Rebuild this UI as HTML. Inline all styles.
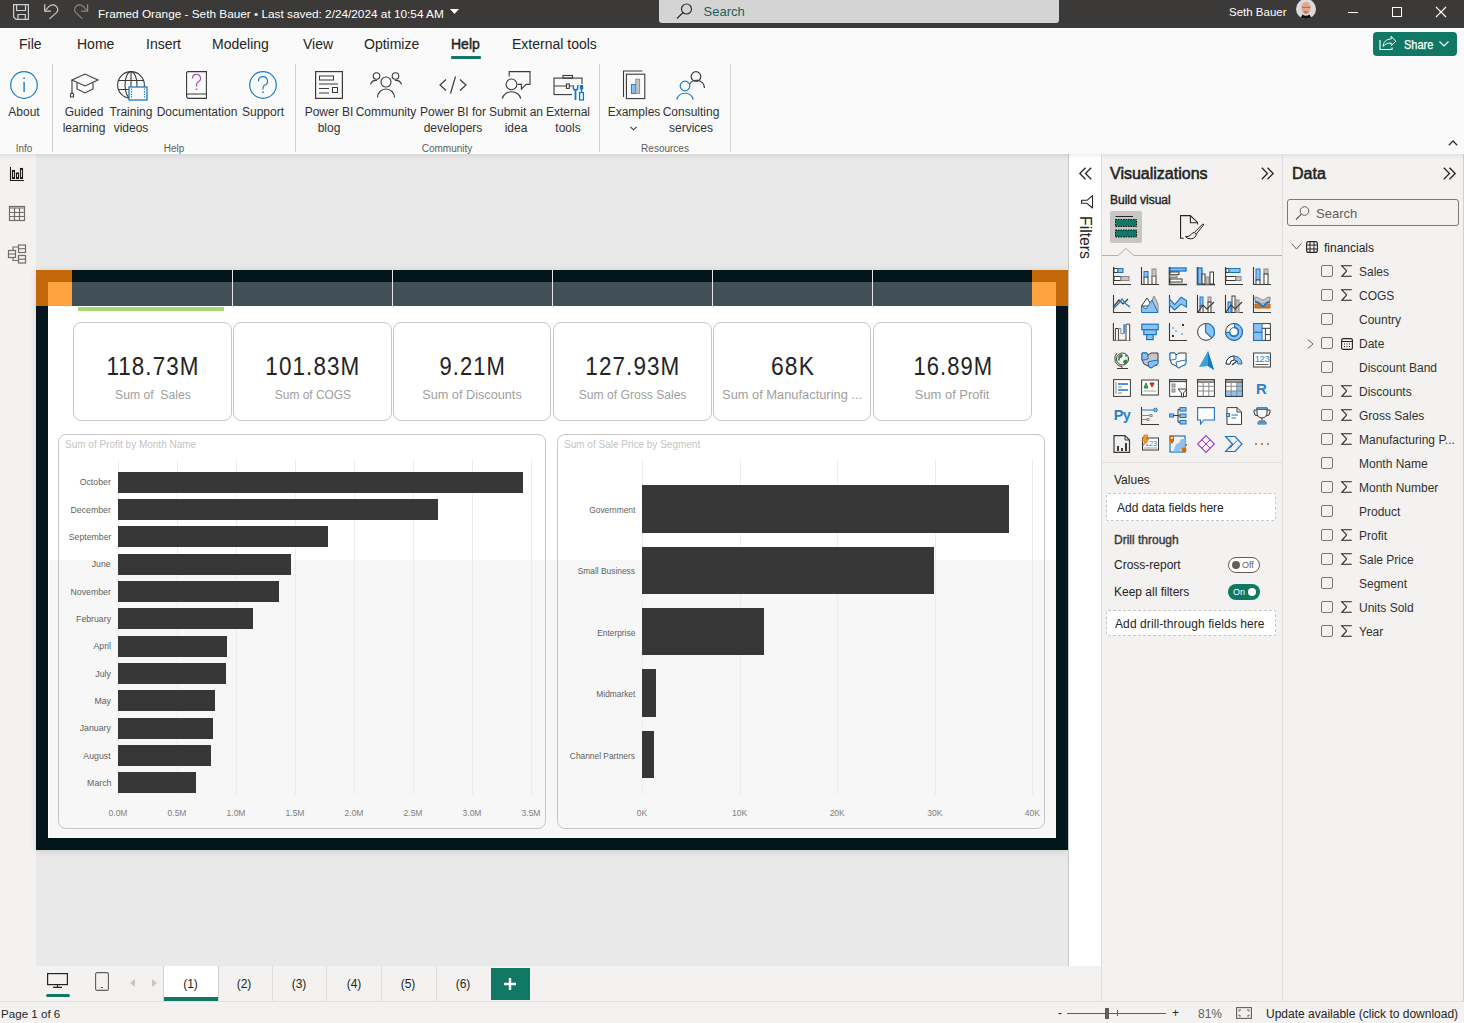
<!DOCTYPE html>
<html><head><meta charset="utf-8">
<style>
*{box-sizing:border-box;margin:0;padding:0}
html,body{width:1464px;height:1023px;overflow:hidden;background:#f3f2f1;font-family:"Liberation Sans",sans-serif;color:#252423}
.a{position:absolute}
.t{position:absolute;white-space:nowrap;line-height:1}
svg{position:absolute;overflow:visible}
#title{left:0;top:0;width:1464px;height:28px;background:#3b3a39}
#tabs{left:0;top:28px;width:1464px;height:126px;background:#fafafa;border-top:1px solid #fff}
.tab{position:absolute;top:37px;font-size:14px;color:#252423;white-space:nowrap;line-height:1}
.rl{position:absolute;font-size:12px;color:#323130;white-space:nowrap;line-height:16px;text-align:center}
.gl{position:absolute;top:143.5px;font-size:10px;color:#605e5c;white-space:nowrap;line-height:1;text-align:center}
.sep{position:absolute;top:64px;width:1px;height:88px;background:#d2d0ce}
.kv{font-size:25px;color:#252423}
.kl{font-size:12.5px;color:#a0a0a0}
.ct{font-size:10px;color:#c4c4c4}
.ax{font-size:8.5px;color:#808080}
.yl{font-size:9.5px;color:#5f5f5f}
.bar{background:#373737}
.ys{font-size:8.2px}
</style></head><body>

<!-- TITLE BAR -->
<div id="title" class="a"></div>
<svg style="left:13px;top:4px" width="17" height="17" viewBox="0 0 17 17"><path d="M0.6 0.6H15.4V15.4H3L0.6 13Z" fill="none" stroke="#cfcfcf" stroke-width="1.2"/><path d="M3.6 0.6V6.5H12.5V0.6M5 15.4V10.5H12.3V15.4" fill="none" stroke="#cfcfcf" stroke-width="1.2"/></svg>
<svg style="left:44px;top:4px" width="16" height="16" viewBox="0 0 16 16"><path d="M0.7 0.2V7.1H7" fill="none" stroke="#cfcfcf" stroke-width="1.2"/><path d="M1.3 6.5L5 2.5Q8.5 -0.5 12.2 2.2Q15.2 5.5 12.5 8.7L5.5 14.9" fill="none" stroke="#cfcfcf" stroke-width="1.1"/></svg>
<svg style="left:74px;top:4px" width="16" height="16" viewBox="0 0 16 16"><path d="M13.6 0.2V7.1H7.3" fill="none" stroke="#8a8a8a" stroke-width="1.2"/><path d="M13 6.5L9.3 2.5Q5.8 -0.5 2.1 2.2Q-0.9 5.5 1.8 8.7L8.5 14.9" fill="none" stroke="#8a8a8a" stroke-width="1.1"/></svg>
<div class="t" style="left:98px;top:9.3px;font-size:11.8px;color:#fff">Framed Orange - Seth Bauer • Last saved: 2/24/2024 at 10:54 AM</div>
<svg style="left:450px;top:9px" width="9" height="5" viewBox="0 0 9 5"><path d="M0 0h9L4.5 5z" fill="#fff"/></svg>
<div class="a" style="left:659px;top:0;width:400px;height:23px;background:#d4d4d4;border-radius:0 0 3px 3px"></div>
<svg style="left:676px;top:3px" width="17" height="16" viewBox="0 0 17 16"><circle cx="10.5" cy="6" r="5" fill="none" stroke="#323130" stroke-width="1.2"/><path d="M7 9.5L1 15.5" stroke="#323130" stroke-width="1.3"/></svg>
<div class="t" style="left:703.5px;top:5px;font-size:13px;color:#1f5e55">Search</div>
<div class="t" style="left:1229px;top:7px;font-size:11.5px;color:#fff">Seth Bauer</div>
<svg style="left:1296px;top:-1px" width="20" height="20" viewBox="0 0 20 20"><defs><clipPath id="av"><circle cx="10" cy="10" r="10"/></clipPath></defs><g clip-path="url(#av)"><rect width="20" height="20" fill="#dadada"/><ellipse cx="10" cy="9" rx="4.6" ry="6.3" fill="#e2a88e"/><path d="M5.8 8.3H14.3" stroke="#7a6a66" stroke-width="0.9"/><path d="M7.2 12.3Q10 16 12.8 12.3" fill="#b86a48"/><path d="M4 20L6.5 15.5Q10 18 13.5 15.5L16 20Z" fill="#111"/></g></svg>
<div class="a" style="left:1348px;top:12px;width:10px;height:1px;background:#fff"></div>
<div class="a" style="left:1392px;top:7px;width:10px;height:10px;border:1px solid #fff"></div>
<svg style="left:1436px;top:7px" width="10" height="10" viewBox="0 0 10 10"><path d="M0 0L10 10M10 0L0 10" stroke="#fff" stroke-width="1.1"/></svg>

<!-- RIBBON -->
<div id="tabs" class="a"></div>
<div class="tab" style="left:19px">File</div>
<div class="tab" style="left:77px">Home</div>
<div class="tab" style="left:146px">Insert</div>
<div class="tab" style="left:212px">Modeling</div>
<div class="tab" style="left:303px">View</div>
<div class="tab" style="left:364px">Optimize</div>
<div class="tab" style="left:451px;font-size:14px;-webkit-text-stroke:0.45px #252423">Help</div>
<div class="a" style="left:451px;top:56px;width:30px;height:3px;background:#117865;border-radius:1px"></div>
<div class="tab" style="left:512px">External tools</div>
<div class="a" style="left:1373px;top:32px;width:84px;height:24px;background:#117865;border-radius:4px"></div>
<svg style="left:1378px;top:35px" width="20" height="17" viewBox="0 0 20 17"><path d="M2 5V14.5H14V12.5" fill="none" stroke="#fff" stroke-width="1.2"/><path d="M17.8 6.2L13.2 1.3V4C8 4 5.2 7.5 5.2 11.4C7 9 9.5 8 13.2 8V10.8Z" fill="none" stroke="#fff" stroke-width="1" stroke-linejoin="round"/></svg>
<div class="t" style="left:1404px;top:39px;font-size:12.2px;color:#fff;-webkit-text-stroke:0.25px #fff;transform-origin:0 0;transform:scaleX(0.9)">Share</div>
<svg style="left:1439px;top:41px" width="10" height="6" viewBox="0 0 10 6"><path d="M0.5 0.5L5 5L9.5 0.5" fill="none" stroke="#fff" stroke-width="1.2"/></svg>

<!-- About -->
<svg style="left:10px;top:71px" width="28" height="28" viewBox="0 0 28 28"><circle cx="14" cy="14" r="13.3" fill="none" stroke="#1a7cc9" stroke-width="1.2"/><rect x="13.4" y="11" width="1.4" height="10" fill="#1a7cc9"/><rect x="13.3" y="6.5" width="1.6" height="1.6" fill="#1a7cc9"/></svg>
<div class="rl" style="left:-6px;top:104px;width:60px">About</div>
<div class="gl" style="left:0;width:48px">Info</div>
<div class="sep" style="left:52px"></div>
<!-- Guided learning -->
<svg style="left:70px;top:73px" width="30" height="26" viewBox="0 0 30 26"><path d="M2 7L15 1L28 7L15 13Z" fill="none" stroke="#3b3a39" stroke-width="1.1"/><path d="M7 10v6l8 4 8-4v-6" fill="none" stroke="#3b3a39" stroke-width="1.1"/><path d="M2 7v13" stroke="#3b3a39" stroke-width="1.1"/><path d="M0.5 24v-3l1.5-1 1.5 1v3z" fill="none" stroke="#3b3a39" stroke-width="1.1"/></svg>
<div class="rl" style="left:54px;top:104px;width:60px">Guided<br>learning</div>
<!-- Training videos -->
<svg style="left:117px;top:71px" width="31" height="30" viewBox="0 0 31 30"><circle cx="14" cy="14" r="13.4" fill="none" stroke="#3b3a39" stroke-width="1.1"/><ellipse cx="14" cy="14" rx="6" ry="13.4" fill="none" stroke="#3b3a39" stroke-width="1.1"/><path d="M1 9.5h26M1 18.5h26M14 0.6v26.8" stroke="#3b3a39" stroke-width="1.1"/><rect x="12" y="16" width="18" height="13" fill="#fafafa" stroke="#1a7cc9" stroke-width="1.3"/><path d="M14.5 17.5v10M27.5 17.5v10" stroke="#1a7cc9" stroke-width="1.2" stroke-dasharray="1.3 1.3"/></svg>
<div class="rl" style="left:101px;top:104px;width:60px">Training<br>videos</div>
<!-- Documentation -->
<svg style="left:186px;top:71px" width="22" height="28" viewBox="0 0 22 28"><path d="M2 0.6h18.4v26.8H3A2.4 2.4 0 0 1 0.6 25V2A1.4 1.4 0 0 1 2 0.6z" fill="none" stroke="#3b3a39" stroke-width="1.1"/><path d="M0.6 24.5A1.6 1.6 0 0 1 2.2 23h18.2" fill="none" stroke="#3b3a39" stroke-width="1.1"/><path d="M6.5 7.5A4 4 0 1 1 12 11c-1.3.6-1.5 1.5-1.5 3v1.5" fill="none" stroke="#b146c2" stroke-width="1.2"/><rect x="9.8" y="17.5" width="1.5" height="1.5" fill="#b146c2"/></svg>
<div class="rl" style="left:147px;top:104px;width:100px">Documentation</div>
<!-- Support -->
<svg style="left:249px;top:71px" width="28" height="28" viewBox="0 0 28 28"><circle cx="14" cy="14" r="13.3" fill="none" stroke="#1a7cc9" stroke-width="1.2"/><path d="M9.5 10.5A4.5 4.5 0 1 1 15.5 14.3c-1.2.6-1.5 1.4-1.5 2.8v1.5" fill="none" stroke="#1a7cc9" stroke-width="1.2"/><rect x="13.3" y="20.5" width="1.5" height="1.5" fill="#1a7cc9"/></svg>
<div class="rl" style="left:233px;top:104px;width:60px">Support</div>
<div class="gl" style="left:124px;width:100px">Help</div>
<div class="sep" style="left:295px"></div>
<!-- Power BI blog -->
<svg style="left:315px;top:71px" width="28" height="28" viewBox="0 0 28 28"><rect x="0.6" y="0.6" width="26.8" height="26.8" fill="none" stroke="#3b3a39" stroke-width="1.2"/><rect x="4.5" y="5" width="14" height="4" fill="none" stroke="#3b3a39" stroke-width="1"/><path d="M4 13h19M4 17.5h10M4 22h10" stroke="#3b3a39" stroke-width="1"/><rect x="17.5" y="16.5" width="5" height="5" fill="none" stroke="#3b3a39" stroke-width="1"/></svg>
<div class="rl" style="left:299px;top:104px;width:60px">Power BI<br>blog</div>
<!-- Community -->
<svg style="left:370px;top:72px" width="32" height="26" viewBox="0 0 32 26"><circle cx="6.5" cy="4" r="3.3" fill="none" stroke="#3b3a39" stroke-width="1.1"/><circle cx="25.5" cy="4" r="3.3" fill="none" stroke="#3b3a39" stroke-width="1.1"/><circle cx="16" cy="10" r="5" fill="none" stroke="#3b3a39" stroke-width="1.1"/><path d="M0.5 12.5A6 6 0 0 1 7 8.5M31.5 12.5A6 6 0 0 0 25 8.5M7.5 25.5A8.5 8.5 0 0 1 24.5 25.5" fill="none" stroke="#3b3a39" stroke-width="1.1"/></svg>
<div class="rl" style="left:346px;top:104px;width:80px">Community</div>
<!-- Power BI for developers -->
<svg style="left:439px;top:76px" width="28" height="18" viewBox="0 0 28 18"><path d="M7 3.5L1 9l6 5.5M21 3.5L27 9l-6 5.5M16.5 0.5l-5 17" fill="none" stroke="#3b3a39" stroke-width="1.2"/></svg>
<div class="rl" style="left:413px;top:104px;width:80px">Power BI for<br>developers</div>
<!-- Submit an idea -->
<svg style="left:501px;top:71px" width="30" height="29" viewBox="0 0 30 29"><path d="M8.2 5.5V0.6H29V13.4H25L20.4 18.1V13.4H16.5" fill="none" stroke="#3b3a39" stroke-width="1.1" stroke-linejoin="miter"/><circle cx="10.5" cy="13.4" r="5.4" fill="#fafafa" stroke="#3b3a39" stroke-width="1.1"/><path d="M1.3 27.6A9.3 8 0 0 1 19.7 27.6" fill="none" stroke="#3b3a39" stroke-width="1.1"/></svg>
<div class="rl" style="left:486px;top:104px;width:60px">Submit an<br>idea</div>
<!-- External tools -->
<svg style="left:553px;top:75px" width="32" height="26" viewBox="0 0 32 26"><rect x="1" y="3.1" width="28" height="16.5" fill="none" stroke="#3b3a39" stroke-width="1.1"/><rect x="10" y="0.5" width="9.5" height="2.6" fill="none" stroke="#3b3a39" stroke-width="1.1"/><path d="M1 11H13.5M16.3 11H20" stroke="#3b3a39" stroke-width="1.1"/><rect x="13.5" y="9" width="2.8" height="4.4" fill="#fafafa" stroke="#3b3a39" stroke-width="1.1"/><rect x="19" y="9" width="12" height="17" fill="#fafafa"/><path d="M20.3 10V12.8A2.2 2.2 0 0 0 24.7 12.8V10" fill="none" stroke="#1a73c8" stroke-width="1.5"/><path d="M22.5 15V25" stroke="#1a73c8" stroke-width="1.8"/><path d="M28.5 10V17" stroke="#1a73c8" stroke-width="1.3"/><rect x="26.8" y="10" width="3.4" height="4.5" fill="#1a73c8"/><rect x="26.6" y="17.5" width="3.8" height="7.5" fill="#fafafa" stroke="#1a73c8" stroke-width="1.3"/></svg>
<div class="rl" style="left:538px;top:104px;width:60px">External<br>tools</div>
<div class="gl" style="left:397px;width:100px">Community</div>
<div class="sep" style="left:599px"></div>
<!-- Examples -->
<svg style="left:622px;top:70px" width="24" height="30" viewBox="0 0 24 30"><path d="M1.5 27V1H20.4" fill="none" stroke="#3b3a39" stroke-width="1.1"/><rect x="4.4" y="4.2" width="18.4" height="24.4" fill="#fafafa" stroke="#3b3a39" stroke-width="1.1"/><rect x="9.4" y="14.4" width="3.9" height="9" fill="#8dc1ee" stroke="#1a73c8" stroke-width="0.9"/><rect x="13.8" y="9.2" width="3.8" height="14.2" fill="#c8c6c4" stroke="#8a8886" stroke-width="0.9"/></svg>
<div class="rl" style="left:604px;top:104px;width:60px">Examples</div>
<svg style="left:630px;top:126px" width="7" height="5" viewBox="0 0 7 5"><path d="M0.5 0.8L3.5 3.8L6.5 0.8" fill="none" stroke="#3b3a39" stroke-width="1.1"/></svg>
<!-- Consulting services -->
<svg style="left:676px;top:71px" width="30" height="29" viewBox="0 0 30 29"><circle cx="20" cy="5.5" r="4.8" fill="none" stroke="#3b3a39" stroke-width="1.2"/><path d="M13 14.5A8 8 0 0 1 28.5 17" fill="none" stroke="#3b3a39" stroke-width="1.2"/><circle cx="9" cy="15" r="4.8" fill="#fafafa" stroke="#1a7cc9" stroke-width="1.2"/><path d="M0.8 28.5A8.5 8.5 0 0 1 17.2 28.5" fill="none" stroke="#1a7cc9" stroke-width="1.2"/></svg>
<div class="rl" style="left:651px;top:104px;width:80px">Consulting<br>services</div>
<div class="gl" style="left:615px;width:100px">Resources</div>
<div class="sep" style="left:730px"></div>
<svg style="left:1448px;top:140px" width="10" height="6" viewBox="0 0 10 6"><path d="M0.8 5.2L5 1L9.2 5.2" fill="none" stroke="#323130" stroke-width="1.3"/></svg>

<!--REPORT-->
<!-- LEFT NAV + CANVAS -->
<div class="a" style="left:0;top:154px;width:36px;height:812px;background:#f3f2f1"></div>
<div class="a" style="left:36px;top:154px;width:1032px;height:812px;background:#e9e9e9"></div>
<div class="a" style="left:0;top:154px;width:1068px;height:6px;background:linear-gradient(rgba(0,0,0,0.07),rgba(0,0,0,0))"></div>
<svg style="left:9px;top:166px" width="16" height="16" viewBox="0 0 16 16"><path d="M1.5 1V14.5H15" fill="none" stroke="#1b1a19" stroke-width="1.1"/><rect x="3.5" y="4.5" width="2" height="8" fill="none" stroke="#1b1a19" stroke-width="1.1"/><rect x="7.5" y="7" width="2" height="5.5" fill="none" stroke="#1b1a19" stroke-width="1.1"/><rect x="11.5" y="2.5" width="2" height="10" fill="none" stroke="#1b1a19" stroke-width="1.1"/></svg>
<svg style="left:9px;top:206px" width="17" height="16" viewBox="0 0 17 16"><rect x="0.5" y="0.5" width="15" height="14" fill="none" stroke="#706e6c" stroke-width="1.2"/><path d="M0.5 2H15.5M0.5 6.5H15.5M0.5 10.5H15.5M5.5 2V14.5M10.5 2V14.5" stroke="#706e6c" stroke-width="1.2"/></svg>
<svg style="left:8px;top:244px" width="19" height="20" viewBox="0 0 19 20"><path d="M5 6.5V3H10.5M5 13.5V16.5H10.5" fill="none" stroke="#706e6c" stroke-width="1.2"/><rect x="0.5" y="6.5" width="7" height="7" fill="#f3f2f1" stroke="#706e6c" stroke-width="1.2"/><path d="M0.5 10H7.5" stroke="#706e6c" stroke-width="1.1"/><rect x="10.5" y="1" width="7" height="7.5" fill="#f3f2f1" stroke="#706e6c" stroke-width="1.2"/><path d="M10.5 4.7H17.5" stroke="#706e6c" stroke-width="1.1"/><rect x="10.5" y="11.5" width="7" height="7.5" fill="#f3f2f1" stroke="#706e6c" stroke-width="1.2"/><path d="M10.5 15.2H17.5" stroke="#706e6c" stroke-width="1.1"/></svg>
<div class="a" style="left:36px;top:270px;width:1032px;height:580px;background:#03161b;box-shadow:0 1px 7px rgba(0,0,0,0.13)"></div>
<div class="a" style="left:36px;top:270px;width:36px;height:36px;background:#c2670a"></div>
<div class="a" style="left:48px;top:282px;width:24px;height:24px;background:#fea340"></div>
<div class="a" style="left:1032px;top:270px;width:36px;height:36px;background:#c2670a"></div>
<div class="a" style="left:1032px;top:282px;width:24px;height:24px;background:#fea340"></div>
<div class="a" style="left:72px;top:282px;width:960px;height:24px;background:#414f56"></div>
<div class="a" style="left:232px;top:270px;width:1px;height:36px;background:#e6e6e6"></div>
<div class="a" style="left:392px;top:270px;width:1px;height:36px;background:#e6e6e6"></div>
<div class="a" style="left:552px;top:270px;width:1px;height:36px;background:#e6e6e6"></div>
<div class="a" style="left:712px;top:270px;width:1px;height:36px;background:#e6e6e6"></div>
<div class="a" style="left:872px;top:270px;width:1px;height:36px;background:#e6e6e6"></div>
<div class="a" style="left:48px;top:306px;width:1008px;height:532px;background:#ffffff"></div>
<div class="a" style="left:49px;top:560px;width:1007px;height:278px;background:#f7f7f7"></div>
<div class="a" style="left:78px;top:307px;width:146px;height:4px;background:#a5da78"></div>
<div class="a" style="left:73px;top:322px;width:159px;height:99px;border:1px solid #c6c6c6;border-radius:8px"></div>
<div class="t kv" style="left:73px;top:353.8px;width:159px;text-align:center"><span style="display:inline-block;letter-spacing:1.2px;margin-right:-1.2px;transform:scaleX(0.896)">118.73M</span></div>
<div class="t kl" style="left:73px;top:388.5px;width:159px;text-align:center"><span style="display:inline-block;transform:scaleX(0.973)">Sum of&nbsp; Sales</span></div>
<div class="a" style="left:233px;top:322px;width:159px;height:99px;border:1px solid #c6c6c6;border-radius:8px"></div>
<div class="t kv" style="left:233px;top:353.8px;width:159px;text-align:center"><span style="display:inline-block;letter-spacing:1.2px;margin-right:-1.2px;transform:scaleX(0.899)">101.83M</span></div>
<div class="t kl" style="left:233px;top:388.5px;width:159px;text-align:center"><span style="display:inline-block;transform:scaleX(0.955)">Sum of COGS</span></div>
<div class="a" style="left:393px;top:322px;width:158px;height:99px;border:1px solid #c6c6c6;border-radius:8px"></div>
<div class="t kv" style="left:393px;top:353.8px;width:158px;text-align:center"><span style="display:inline-block;letter-spacing:1.2px;margin-right:-1.2px;transform:scaleX(0.880)">9.21M</span></div>
<div class="t kl" style="left:393px;top:388.5px;width:158px;text-align:center"><span style="display:inline-block;transform:scaleX(1.016)">Sum of Discounts</span></div>
<div class="a" style="left:553px;top:322px;width:159px;height:99px;border:1px solid #c6c6c6;border-radius:8px"></div>
<div class="t kv" style="left:553px;top:353.8px;width:159px;text-align:center"><span style="display:inline-block;letter-spacing:1.2px;margin-right:-1.2px;transform:scaleX(0.899)">127.93M</span></div>
<div class="t kl" style="left:553px;top:388.5px;width:159px;text-align:center"><span style="display:inline-block;transform:scaleX(0.969)">Sum of Gross Sales</span></div>
<div class="a" style="left:713px;top:322px;width:158px;height:99px;border:1px solid #c6c6c6;border-radius:8px"></div>
<div class="t kv" style="left:713px;top:353.8px;width:158px;text-align:center"><span style="display:inline-block;letter-spacing:1.2px;margin-right:-1.2px;transform:scaleX(0.914)">68K</span></div>
<div class="t kl" style="left:713px;top:388.5px;width:158px;text-align:center"><span style="display:inline-block;transform:scaleX(1.028)">Sum of Manufacturing ...</span></div>
<div class="a" style="left:873px;top:322px;width:159px;height:99px;border:1px solid #c6c6c6;border-radius:8px"></div>
<div class="t kv" style="left:873px;top:353.8px;width:159px;text-align:center"><span style="display:inline-block;letter-spacing:1.2px;margin-right:-1.2px;transform:scaleX(0.880)">16.89M</span></div>
<div class="t kl" style="left:873px;top:388.5px;width:159px;text-align:center"><span style="display:inline-block;transform:scaleX(1.032)">Sum of Profit</span></div>
<div class="a" style="left:58px;top:434px;width:488px;height:395px;border:1px solid #c6c6c6;border-radius:8px"></div>
<div class="a" style="left:557px;top:434px;width:488px;height:395px;border:1px solid #c6c6c6;border-radius:8px"></div>
<div class="t ct" style="left:65px;top:440px">Sum of Profit by Month Name</div>
<div class="t ct" style="left:564px;top:440px">Sum of Sale Price by Segment</div>
<div class="a" style="left:118px;top:460px;width:1px;height:335px;background:#ececec"></div>
<div class="t ax" style="left:93px;top:809px;width:50px;text-align:center">0.0M</div>
<div class="a" style="left:177px;top:460px;width:1px;height:335px;background:#ececec"></div>
<div class="t ax" style="left:152px;top:809px;width:50px;text-align:center">0.5M</div>
<div class="a" style="left:236px;top:460px;width:1px;height:335px;background:#ececec"></div>
<div class="t ax" style="left:211px;top:809px;width:50px;text-align:center">1.0M</div>
<div class="a" style="left:295px;top:460px;width:1px;height:335px;background:#ececec"></div>
<div class="t ax" style="left:270px;top:809px;width:50px;text-align:center">1.5M</div>
<div class="a" style="left:354px;top:460px;width:1px;height:335px;background:#ececec"></div>
<div class="t ax" style="left:329px;top:809px;width:50px;text-align:center">2.0M</div>
<div class="a" style="left:413px;top:460px;width:1px;height:335px;background:#ececec"></div>
<div class="t ax" style="left:388px;top:809px;width:50px;text-align:center">2.5M</div>
<div class="a" style="left:472px;top:460px;width:1px;height:335px;background:#ececec"></div>
<div class="t ax" style="left:447px;top:809px;width:50px;text-align:center">3.0M</div>
<div class="a" style="left:531px;top:460px;width:1px;height:335px;background:#ececec"></div>
<div class="t ax" style="left:506px;top:809px;width:50px;text-align:center">3.5M</div>
<div class="a bar" style="left:118px;top:471.8px;width:405px;height:21px"></div>
<div class="t yl" style="left:21px;top:477.4px;width:90px;text-align:right"><span style="display:inline-block;transform-origin:100% 50%;transform:scaleX(0.92)">October</span></div>
<div class="a bar" style="left:118px;top:499.1px;width:320px;height:21px"></div>
<div class="t yl" style="left:21px;top:504.7px;width:90px;text-align:right"><span style="display:inline-block;transform-origin:100% 50%;transform:scaleX(0.92)">December</span></div>
<div class="a bar" style="left:118px;top:526.4px;width:210px;height:21px"></div>
<div class="t yl" style="left:21px;top:532.0px;width:90px;text-align:right"><span style="display:inline-block;transform-origin:100% 50%;transform:scaleX(0.92)">September</span></div>
<div class="a bar" style="left:118px;top:553.8px;width:173px;height:21px"></div>
<div class="t yl" style="left:21px;top:559.4px;width:90px;text-align:right"><span style="display:inline-block;transform-origin:100% 50%;transform:scaleX(0.92)">June</span></div>
<div class="a bar" style="left:118px;top:581.1px;width:161px;height:21px"></div>
<div class="t yl" style="left:21px;top:586.7px;width:90px;text-align:right"><span style="display:inline-block;transform-origin:100% 50%;transform:scaleX(0.92)">November</span></div>
<div class="a bar" style="left:118px;top:608.4px;width:135px;height:21px"></div>
<div class="t yl" style="left:21px;top:614.0px;width:90px;text-align:right"><span style="display:inline-block;transform-origin:100% 50%;transform:scaleX(0.92)">February</span></div>
<div class="a bar" style="left:118px;top:635.7px;width:109px;height:21px"></div>
<div class="t yl" style="left:21px;top:641.3px;width:90px;text-align:right"><span style="display:inline-block;transform-origin:100% 50%;transform:scaleX(0.92)">April</span></div>
<div class="a bar" style="left:118px;top:663.0px;width:108px;height:21px"></div>
<div class="t yl" style="left:21px;top:668.6px;width:90px;text-align:right"><span style="display:inline-block;transform-origin:100% 50%;transform:scaleX(0.92)">July</span></div>
<div class="a bar" style="left:118px;top:690.4px;width:97px;height:21px"></div>
<div class="t yl" style="left:21px;top:696.0px;width:90px;text-align:right"><span style="display:inline-block;transform-origin:100% 50%;transform:scaleX(0.92)">May</span></div>
<div class="a bar" style="left:118px;top:717.7px;width:95px;height:21px"></div>
<div class="t yl" style="left:21px;top:723.3px;width:90px;text-align:right"><span style="display:inline-block;transform-origin:100% 50%;transform:scaleX(0.92)">January</span></div>
<div class="a bar" style="left:118px;top:745.0px;width:93px;height:21px"></div>
<div class="t yl" style="left:21px;top:750.6px;width:90px;text-align:right"><span style="display:inline-block;transform-origin:100% 50%;transform:scaleX(0.92)">August</span></div>
<div class="a bar" style="left:118px;top:772.3px;width:78px;height:21px"></div>
<div class="t yl" style="left:21px;top:777.9px;width:90px;text-align:right"><span style="display:inline-block;transform-origin:100% 50%;transform:scaleX(0.92)">March</span></div>
<div class="a" style="left:642.0px;top:460px;width:1px;height:335px;background:#ececec"></div>
<div class="t ax" style="left:617.0px;top:809px;width:50px;text-align:center">0K</div>
<div class="a" style="left:739.6px;top:460px;width:1px;height:335px;background:#ececec"></div>
<div class="t ax" style="left:714.6px;top:809px;width:50px;text-align:center">10K</div>
<div class="a" style="left:837.2px;top:460px;width:1px;height:335px;background:#ececec"></div>
<div class="t ax" style="left:812.2px;top:809px;width:50px;text-align:center">20K</div>
<div class="a" style="left:934.8px;top:460px;width:1px;height:335px;background:#ececec"></div>
<div class="t ax" style="left:909.8px;top:809px;width:50px;text-align:center">30K</div>
<div class="a" style="left:1032.4px;top:460px;width:1px;height:335px;background:#ececec"></div>
<div class="t ax" style="left:1007.4px;top:809px;width:50px;text-align:center">40K</div>
<div class="a bar" style="left:642px;top:485.2px;width:367px;height:47.4px"></div>
<div class="t yl" style="left:535px;top:505.1px;width:100px;text-align:right"><span style="display:inline-block;transform-origin:100% 50%;transform:scaleX(0.88)">Government</span></div>
<div class="a bar" style="left:642px;top:546.5px;width:292px;height:47.4px"></div>
<div class="t yl" style="left:535px;top:566.4px;width:100px;text-align:right"><span style="display:inline-block;transform-origin:100% 50%;transform:scaleX(0.88)">Small Business</span></div>
<div class="a bar" style="left:642px;top:607.9px;width:122px;height:47.4px"></div>
<div class="t yl" style="left:535px;top:627.8px;width:100px;text-align:right"><span style="display:inline-block;transform-origin:100% 50%;transform:scaleX(0.88)">Enterprise</span></div>
<div class="a bar" style="left:642px;top:669.2px;width:14px;height:47.4px"></div>
<div class="t yl" style="left:535px;top:689.1px;width:100px;text-align:right"><span style="display:inline-block;transform-origin:100% 50%;transform:scaleX(0.88)">Midmarket</span></div>
<div class="a bar" style="left:642px;top:730.6px;width:11.5px;height:47.4px"></div>
<div class="t yl" style="left:535px;top:750.5px;width:100px;text-align:right"><span style="display:inline-block;transform-origin:100% 50%;transform:scaleX(0.88)">Channel Partners</span></div>
<!--/REPORT-->
<!--PANES--><div class="a" style="left:1068px;top:154px;width:34px;height:812px;background:#fff;border-left:1px solid #c8c6c4;border-right:1px solid #e1dfdd"></div>
<svg style="left:1079px;top:167px" width="13" height="13" viewBox="0 0 13 13"><path d="M6.5 0.8L0.8 6.5L6.5 12.2M12.2 0.8L6.5 6.5L12.2 12.2" fill="none" stroke="#252423" stroke-width="1.3"/></svg>
<svg style="left:1081px;top:195px" width="13" height="14" viewBox="0 0 13 14"><path d="M11.5 0.6V13L6 8.3H0.6V5.3H6Z" fill="none" stroke="#252423" stroke-width="1.1" stroke-linejoin="round"/></svg>
<div class="t" style="left:1093px;top:216px;font-size:15.8px;color:#252423;transform-origin:0 0;transform:rotate(90deg)">Filters</div>
<div class="a" style="left:1102px;top:154px;width:181px;height:847px;background:#f3f2f1;border-right:1px solid #e1dfdd"></div>
<div class="t" style="left:1110px;top:166px;font-size:16px;color:#252423;-webkit-text-stroke:0.55px #252423">Visualizations</div>
<svg style="left:1261px;top:167px" width="13" height="13" viewBox="0 0 13 13"><path d="M6.5 0.8L12.2 6.5L6.5 12.2M0.8 0.8L6.5 6.5L0.8 12.2" fill="none" stroke="#252423" stroke-width="1.3"/></svg>
<div class="t" style="left:1110px;top:194px;font-size:12px;color:#252423;-webkit-text-stroke:0.4px #252423">Build visual</div>
<div class="a" style="left:1110px;top:211px;width:32px;height:32px;background:#c8c6c4;border-radius:2px"></div>
<svg style="left:1114px;top:215px" width="24" height="24" viewBox="0 0 24 24"><path d="M1.5 1.5H19" stroke="#252423" stroke-width="1"/><rect x="1.5" y="4.5" width="21" height="7" fill="#117865" stroke="#111" stroke-width="1" stroke-dasharray="1.5 1"/><rect x="1.5" y="15" width="21" height="7" fill="#117865" stroke="#111" stroke-width="1" stroke-dasharray="1.5 1"/></svg>
<svg style="left:1179px;top:214px" width="26" height="26" viewBox="0 0 26 26"><path d="M4.7 24.3H1.55V1.6H11.4L18.5 8.3V10.5" fill="none" stroke="#252423" stroke-width="1.1" stroke-linejoin="round"/><path d="M11.4 1.6V8.7H17.7" fill="none" stroke="#252423" stroke-width="1.1"/><path d="M15.3 18.6L23.3 10.4Q24.9 9.4 24.5 11L17.2 20.2" fill="none" stroke="#252423" stroke-width="1"/><path d="M15.3 18.6Q13.2 18.4 12 20.6Q10.5 22.8 6.5 22.7Q8.5 25.2 12.3 24.8Q16.8 24.2 17.2 20.2Q16.4 18.8 15.3 18.6Z" fill="none" stroke="#252423" stroke-width="1" stroke-linejoin="round"/></svg>
<svg style="left:1102px;top:247px" width="180" height="10" viewBox="0 0 180 10"><path d="M0 8.5H16L24 1.5L32 8.5H180" fill="none" stroke="#b3b0ad" stroke-width="1"/></svg>
<svg style="left:1113px;top:267px" width="18" height="18" viewBox="0 0 18 18"><path d="M0.5 0V17.5H18" fill="none" stroke="#3b3a39" stroke-width="1.1" /><rect x="1" y="1.5" width="4" height="4" fill="#ffffff" stroke="#3b3a39" stroke-width="1"/><rect x="5" y="1.5" width="5" height="4" fill="#8dc1ee" stroke="#1a73c8" stroke-width="1"/><rect x="1" y="9.5" width="7" height="4" fill="#ffffff" stroke="#3b3a39" stroke-width="1"/><rect x="8" y="9.5" width="8" height="4" fill="#c8c6c4" stroke="#8a8886" stroke-width="1"/></svg>
<svg style="left:1141px;top:267px" width="18" height="18" viewBox="0 0 18 18"><path d="M0.5 0V17.5H18" fill="none" stroke="#3b3a39" stroke-width="1.1" /><rect x="3" y="10" width="4" height="7.5" fill="#ffffff" stroke="#3b3a39" stroke-width="1"/><rect x="3" y="4.5" width="4" height="5.5" fill="#8dc1ee" stroke="#1a73c8" stroke-width="1"/><rect x="11" y="9" width="4" height="8.5" fill="#ffffff" stroke="#3b3a39" stroke-width="1"/><rect x="11" y="2" width="4" height="7" fill="#c8c6c4" stroke="#8a8886" stroke-width="1"/></svg>
<svg style="left:1169px;top:267px" width="18" height="18" viewBox="0 0 18 18"><path d="M0.5 0V17.5H18" fill="none" stroke="#3b3a39" stroke-width="1.6" /><rect x="1" y="1" width="16" height="3" fill="#8dc1ee" stroke="#1a73c8" stroke-width="1.3"/><rect x="1" y="5" width="9" height="2.5" fill="#ffffff" stroke="#3b3a39" stroke-width="1"/><rect x="1" y="8" width="7" height="2.5" fill="#c8c6c4" stroke="#8a8886" stroke-width="1"/><rect x="1" y="12" width="12" height="3" fill="#ffffff" stroke="#3b3a39" stroke-width="1"/></svg>
<svg style="left:1197px;top:267px" width="18" height="18" viewBox="0 0 18 18"><path d="M0.5 0V17.5H18" fill="none" stroke="#3b3a39" stroke-width="1.6" /><rect x="1" y="1" width="4" height="16" fill="#8dc1ee" stroke="#1a73c8" stroke-width="1.3"/><rect x="5" y="7" width="3" height="10" fill="#ffffff" stroke="#3b3a39" stroke-width="1"/><rect x="9" y="10" width="3" height="7" fill="#c8c6c4" stroke="#8a8886" stroke-width="1"/><rect x="13" y="5" width="3.5" height="12" fill="#ffffff" stroke="#3b3a39" stroke-width="1"/></svg>
<svg style="left:1225px;top:267px" width="18" height="18" viewBox="0 0 18 18"><path d="M0.5 0V17.5H18" fill="none" stroke="#3b3a39" stroke-width="1.1" /><rect x="1" y="1.5" width="3" height="4" fill="#ffffff" stroke="#3b3a39" stroke-width="1"/><rect x="4" y="1.5" width="11" height="4" fill="#8dc1ee" stroke="#1a73c8" stroke-width="1"/><rect x="1" y="9.5" width="10" height="4" fill="#ffffff" stroke="#3b3a39" stroke-width="1"/><rect x="11" y="9.5" width="5" height="4" fill="#c8c6c4" stroke="#8a8886" stroke-width="1"/></svg>
<svg style="left:1253px;top:267px" width="18" height="18" viewBox="0 0 18 18"><path d="M0.5 0V17.5H18" fill="none" stroke="#3b3a39" stroke-width="1.1" /><rect x="3" y="2" width="4" height="11" fill="#8dc1ee" stroke="#1a73c8" stroke-width="1"/><rect x="3" y="13" width="4" height="4.5" fill="#ffffff" stroke="#3b3a39" stroke-width="1"/><rect x="11" y="2" width="4" height="5" fill="#c8c6c4" stroke="#8a8886" stroke-width="1"/><rect x="11" y="7" width="4" height="10.5" fill="#ffffff" stroke="#3b3a39" stroke-width="1"/></svg>
<svg style="left:1113px;top:295px" width="18" height="18" viewBox="0 0 18 18"><path d="M0.5 0V17.5H18" fill="none" stroke="#3b3a39" stroke-width="1.1" /><path d="M1 11L6 5L10 9L15 4" fill="none" stroke="#3b3a39" stroke-width="1.2" /><path d="M1 13L6 8L9 4L13 9L17 12" fill="none" stroke="#1a73c8" stroke-width="1.2" /></svg>
<svg style="left:1141px;top:295px" width="18" height="18" viewBox="0 0 18 18"><path d="M0.5 11L6 3L11 11Z" fill="#ffffff" stroke="#3b3a39" stroke-width="1" /><path d="M9 10L13 1L17 9V17H9Z" fill="#c8c6c4" stroke="#8a8886" stroke-width="1" /><path d="M0.5 17.5V11L5 14L11 5L17 17.5Z" fill="#8dc1ee" stroke="#1a73c8" stroke-width="1" /></svg>
<svg style="left:1169px;top:295px" width="18" height="18" viewBox="0 0 18 18"><path d="M0.5 0V17.5H18" fill="none" stroke="#3b3a39" stroke-width="1.1" /><path d="M0.5 3.9L5.7 9.7L12.1 2.2L17.5 5.6V12L12.1 9.1L5.7 14.9L0.5 10.3Z" fill="#8dc1ee" stroke="#1a73c8" stroke-width="1.1" /></svg>
<svg style="left:1197px;top:295px" width="18" height="18" viewBox="0 0 18 18"><path d="M0.5 0V17.5H18" fill="none" stroke="#3b3a39" stroke-width="1.1" /><rect x="3" y="2" width="3" height="9" fill="#8dc1ee" stroke="#1a73c8" stroke-width="1"/><rect x="3" y="11" width="3" height="6.5" fill="#ffffff" stroke="#3b3a39" stroke-width="1"/><rect x="11" y="2" width="3" height="5" fill="#c8c6c4" stroke="#8a8886" stroke-width="1"/><rect x="11" y="7" width="3" height="10.5" fill="#ffffff" stroke="#3b3a39" stroke-width="1"/><path d="M1 17L6 10L10 14L17 7" fill="none" stroke="#3b3a39" stroke-width="1.1" /></svg>
<svg style="left:1225px;top:295px" width="18" height="18" viewBox="0 0 18 18"><path d="M0.5 0V17.5H18" fill="none" stroke="#3b3a39" stroke-width="1.1" /><rect x="3" y="7" width="3" height="10.5" fill="#8dc1ee" stroke="#1a73c8" stroke-width="1"/><rect x="7" y="1" width="3" height="16.5" fill="#ffffff" stroke="#3b3a39" stroke-width="1"/><rect x="11" y="5" width="3" height="12.5" fill="#c8c6c4" stroke="#8a8886" stroke-width="1"/><path d="M1 17L6 10L10 14L17 7" fill="none" stroke="#3b3a39" stroke-width="1.1" /></svg>
<svg style="left:1253px;top:295px" width="18" height="18" viewBox="0 0 18 18"><path d="M0.5 0V17.5H18" fill="none" stroke="#3b3a39" stroke-width="1.1" /><path d="M2 2C6 2 8 5 10 5C12 5 13 2 17 2V6C13 6 12 9 10 9C8 9 6 6 2 6Z" fill="#c8c6c4" stroke="#8a8886" stroke-width="1" /><path d="M2 9C6 9 7 12 10 12C13 12 14 9 17 9V13H2Z" fill="#e07a1f" stroke="#c05e00" stroke-width="1" /><path d="M2 7C6 7 8 11 10 11C12 11 13 7 17 7" fill="none" stroke="#1a73c8" stroke-width="2" /></svg>
<svg style="left:1113px;top:323px" width="18" height="18" viewBox="0 0 18 18"><path d="M0.4 0V17.3H17.7" fill="none" stroke="#3b3a39" stroke-width="1.1" /><path d="M2.4 17.3V5.5H5.4V17.3" fill="#ffffff" stroke="#3b3a39" stroke-width="1" /><path d="M5.4 5.5H7.9V10.6H10.8" fill="none" stroke="#8a8886" stroke-width="1" /><path d="M11.1 10.6V1.2" fill="none" stroke="#1a73c8" stroke-width="1.4" /><path d="M13 17.3V1.2H16.7V17.3" fill="#ffffff" stroke="#3b3a39" stroke-width="1" /></svg>
<svg style="left:1141px;top:323px" width="18" height="18" viewBox="0 0 18 18"><rect x="0.8" y="1.2" width="16.4" height="5.5" fill="#8dc1ee" stroke="#1a73c8" stroke-width="1.2"/><rect x="2.8" y="6.7" width="12.4" height="4.9" fill="#8dc1ee" stroke="#1a73c8" stroke-width="1.2"/><rect x="5.6" y="11.6" width="6.6" height="5" fill="#8dc1ee" stroke="#1a73c8" stroke-width="1.2"/></svg>
<svg style="left:1169px;top:323px" width="18" height="18" viewBox="0 0 18 18"><path d="M0.5 0V17.5H18" fill="none" stroke="#3b3a39" stroke-width="1.1" /><rect x="3" y="4" width="2" height="2" fill="#8dc1ee" stroke="none" stroke-width="1"/><rect x="6" y="7" width="2" height="2" fill="#8dc1ee" stroke="none" stroke-width="1"/><rect x="12" y="10" width="2" height="2" fill="#8dc1ee" stroke="none" stroke-width="1"/><rect x="13" y="1" width="2" height="2" fill="#3b3a39" stroke="none" stroke-width="1"/><rect x="3" y="12" width="2" height="2" fill="#3b3a39" stroke="none" stroke-width="1"/></svg>
<svg style="left:1197px;top:323px" width="18" height="18" viewBox="0 0 18 18"><circle cx="9" cy="8.9" r="8.4" fill="#f8f8f8" stroke="#3b3a39" stroke-width="1"/><path d="M8.6 0.5A8.4 8.4 0 0 1 14.9 14.9L8.6 9.2Z" fill="#8dc1ee" stroke="#1a73c8" stroke-width="1.1" /></svg>
<svg style="left:1225px;top:323px" width="18" height="18" viewBox="0 0 18 18"><circle cx="9" cy="8.9" r="8.4" fill="#f8f8f8" stroke="#3b3a39" stroke-width="1"/><path d="M9.6 0.5A8.4 8.4 0 1 1 0.6 9.4H4.7A4.3 4.3 0 1 0 9.6 4.6Z" fill="#8dc1ee" stroke="#1a73c8" stroke-width="1.1" /><circle cx="9" cy="8.9" r="4.3" fill="#f8f8f8" stroke="#3b3a39" stroke-width="0.8"/><path d="M9.6 4.6A4.3 4.3 0 1 1 4.7 9.4" fill="none" stroke="#1a73c8" stroke-width="1.1" /></svg>
<svg style="left:1253px;top:323px" width="18" height="18" viewBox="0 0 18 18"><rect x="0.6" y="0.6" width="16.8" height="16.8" fill="#ffffff" stroke="#3b3a39" stroke-width="1"/><rect x="0.6" y="0.6" width="8.4" height="8.7" fill="#8dc1ee" stroke="#1a73c8" stroke-width="1"/><rect x="0.6" y="9.3" width="8.4" height="8.1" fill="#8dc1ee" stroke="#1a73c8" stroke-width="1"/><path d="M9 5.3H17.4M12.4 5.3V17.4M12.4 11.6H17.4" fill="none" stroke="#3b3a39" stroke-width="1" /></svg>
<svg style="left:1113px;top:351px" width="18" height="18" viewBox="0 0 18 18"><circle cx="9.5" cy="8" r="6" fill="#f4f4f4" stroke="#3b3a39" stroke-width="1"/><path d="M5.5 5C7 3 9 3 10 4L9 6.5L7 7L6.5 10L5 9Z" fill="#2e8b3a" stroke="none" stroke-width="1" /><path d="M11 9L14.5 8.5L14 12L11.5 13.5L10 11Z" fill="#2e8b3a" stroke="none" stroke-width="1" /><path d="M12 3L14.5 5L12.5 6Z" fill="#2e8b3a" stroke="none" stroke-width="1" /><path d="M4 2A8 8 0 0 0 9 15.5V17.5M4 17.5H15" fill="none" stroke="#3b3a39" stroke-width="1" /></svg>
<svg style="left:1141px;top:351px" width="18" height="18" viewBox="0 0 18 18"><path d="M1 2H6L7 4L10 2H17V10L16 14L13 15L10 17L7 15L3 13L1 9Z" fill="#c8c6c4" stroke="#3b3a39" stroke-width="1" /><path d="M1 2H6L7 4V8L3 9L1 9Z" fill="#8dc1ee" stroke="#1a73c8" stroke-width="1" /><path d="M7 11L11 10L17 9V13L13 15L10 17L8 16Z" fill="#8dc1ee" stroke="#1a73c8" stroke-width="1" /></svg>
<svg style="left:1169px;top:351px" width="18" height="18" viewBox="0 0 18 18"><path d="M1 2H6L7 4L10 2H17V10L16 14L13 15L10 17L7 15L3 13L1 9Z" fill="#ffffff" stroke="#3b3a39" stroke-width="1" /><path d="M1 2H6L7 4V8L3 9L1 9Z M7 11L11 10L17 9V13L13 15L10 17L8 16Z" fill="#ffffff" stroke="#1a73c8" stroke-width="1" /></svg>
<svg style="left:1197px;top:351px" width="18" height="18" viewBox="0 0 18 18"><path d="M11 0L17 19L11 15L2 16Z" fill="#3aa0da" stroke="none" stroke-width="1" /><path d="M11 0L17 19L11 15Z" fill="#1478c6" stroke="none" stroke-width="1" /></svg>
<svg style="left:1225px;top:351px" width="18" height="18" viewBox="0 0 18 18"><path d="M1 13A8 8 0 0 1 17 13H13A4 4 0 0 0 5 13Z" fill="#8dc1ee" stroke="#1a73c8" stroke-width="1" /><path d="M1 13A8 8 0 0 1 9 5V9A4 4 0 0 0 5 13Z" fill="#ffffff" stroke="#3b3a39" stroke-width="1" /><path d="M7 14L12 10" fill="none" stroke="#3b3a39" stroke-width="1.5" /></svg>
<svg style="left:1253px;top:351px" width="18" height="18" viewBox="0 0 18 18"><rect x="0.6" y="2" width="16.8" height="14" fill="#ffffff" stroke="#3b3a39" stroke-width="1"/><text x="9" y="11.3" font-size="9.5" text-anchor="middle" fill="#2a8ad8" font-family="Liberation Sans" letter-spacing="-0.4">123</text><path d="M2.5 13.5H15.5" fill="none" stroke="#3b3a39" stroke-width="0.8" /></svg>
<svg style="left:1113px;top:379px" width="18" height="18" viewBox="0 0 18 18"><rect x="0.6" y="0.6" width="16.8" height="16.8" fill="#ffffff" stroke="#3b3a39" stroke-width="1"/><path d="M5 5H15M5 11H15" fill="none" stroke="#1a73c8" stroke-width="1.5" /><path d="M5 8H9M5 14H9M3 3V15" fill="none" stroke="#8a8886" stroke-width="1" /></svg>
<svg style="left:1141px;top:379px" width="18" height="18" viewBox="0 0 18 18"><rect x="0.6" y="1" width="16.8" height="15" fill="#ffffff" stroke="#3b3a39" stroke-width="1"/><path d="M3 9L5 4L7 9Z" fill="#3aa34a" stroke="#2e8b3a" stroke-width="1" /><path d="M9 4H13L11 8Z" fill="#e03030" stroke="#c02020" stroke-width="1" /><path d="M2.5 12H15.5" fill="none" stroke="#8a8886" stroke-width="0.8" /></svg>
<svg style="left:1169px;top:379px" width="18" height="18" viewBox="0 0 18 18"><rect x="0.6" y="0.6" width="16.8" height="16.8" fill="#ffffff" stroke="#3b3a39" stroke-width="1"/><rect x="0.6" y="0.6" width="16.8" height="2" fill="#c8c6c4" stroke="#3b3a39" stroke-width="1"/><rect x="3" y="5" width="3" height="3" fill="#c8c6c4" stroke="#8a8886" stroke-width="1"/><rect x="3" y="10" width="3" height="3" fill="#c8c6c4" stroke="#8a8886" stroke-width="1"/><path d="M9 10H18L14.5 14V18H12.5V14Z" fill="#ffffff" stroke="#3b3a39" stroke-width="1" /></svg>
<svg style="left:1197px;top:379px" width="18" height="18" viewBox="0 0 18 18"><rect x="0.6" y="0.6" width="16.8" height="16.8" fill="#ffffff" stroke="#3b3a39" stroke-width="1"/><rect x="0.6" y="0.6" width="16.8" height="2.5" fill="#c8c6c4" stroke="#3b3a39" stroke-width="1"/><path d="M0.6 7.3H17.4M0.6 12H17.4M6.2 3V17.4M11.8 3V17.4" fill="none" stroke="#8a8886" stroke-width="1" /></svg>
<svg style="left:1225px;top:379px" width="18" height="18" viewBox="0 0 18 18"><rect x="0.6" y="0.6" width="16.8" height="16.8" fill="#ffffff" stroke="#3b3a39" stroke-width="1"/><rect x="11.8" y="3" width="5.6" height="14.4" fill="#8dc1ee" stroke="none" stroke-width="1"/><rect x="0.6" y="12" width="16.8" height="5.4" fill="#8dc1ee" stroke="none" stroke-width="1"/><rect x="0.6" y="0.6" width="16.8" height="2.5" fill="#c8c6c4" stroke="#3b3a39" stroke-width="1"/><path d="M0.6 7.3H17.4M0.6 12H17.4M6.2 3V17.4M11.8 3V17.4" fill="none" stroke="#8a8886" stroke-width="1" /><rect x="0.6" y="0.6" width="16.8" height="16.8" fill="none" stroke="#3b3a39" stroke-width="1"/></svg>
<svg style="left:1253px;top:379px" width="18" height="18" viewBox="0 0 18 18"><text x="8.5" y="14.6" font-size="15" font-weight="bold" text-anchor="middle" fill="#2a82c9" font-family="Liberation Sans">R</text></svg>
<svg style="left:1113px;top:407px" width="18" height="18" viewBox="0 0 18 18"><text x="9" y="13" font-size="14.5" font-weight="bold" text-anchor="middle" fill="#2a82c9" font-family="Liberation Sans" letter-spacing="-0.5">Py</text></svg>
<svg style="left:1141px;top:407px" width="18" height="18" viewBox="0 0 18 18"><path d="M0.5 0V17.5H18" fill="none" stroke="#3b3a39" stroke-width="1.1" /><path d="M0.5 3H13" fill="none" stroke="#1a73c8" stroke-width="1" /><circle cx="14.5" cy="3" r="1.8" fill="#8dc1ee" stroke="#1a73c8"/><path d="M0.5 8.5H9M0.5 12.5H6" fill="none" stroke="#8a8886" stroke-width="1" /><rect x="9" y="7.5" width="2" height="2" fill="#c8c6c4" stroke="#8a8886" stroke-width="1"/><rect x="6" y="11.5" width="2" height="2" fill="#c8c6c4" stroke="#8a8886" stroke-width="1"/></svg>
<svg style="left:1169px;top:407px" width="18" height="18" viewBox="0 0 18 18"><rect x="0.6" y="7" width="4" height="3" fill="#8dc1ee" stroke="#1a73c8" stroke-width="1"/><rect x="11" y="0.6" width="6" height="3.5" fill="#8dc1ee" stroke="#1a73c8" stroke-width="1"/><rect x="11" y="7" width="6" height="3.5" fill="#8dc1ee" stroke="#1a73c8" stroke-width="1"/><rect x="11" y="13.5" width="6" height="3.5" fill="#8dc1ee" stroke="#1a73c8" stroke-width="1"/><path d="M4.6 8.5H9M9 2.3V15.2M9 2.3H11M9 8.8H11M9 15.2H11" fill="none" stroke="#3b3a39" stroke-width="1" /></svg>
<svg style="left:1197px;top:407px" width="18" height="18" viewBox="0 0 18 18"><path d="M0.6 0.6H17.4V13H7L3.5 17V13H0.6Z" fill="#ffffff" stroke="#1a73c8" stroke-width="1.1" /></svg>
<svg style="left:1225px;top:407px" width="18" height="18" viewBox="0 0 18 18"><path d="M2 0.6H12L16.5 5V17.4H2Z" fill="#ffffff" stroke="#3b3a39" stroke-width="1" /><path d="M12 0.6V5H16.5" fill="none" stroke="#3b3a39" stroke-width="1" /><rect x="1.5" y="6.5" width="3" height="3" fill="#8dc1ee" stroke="#1a73c8" stroke-width="1"/><path d="M6.5 8H13M6.5 11H11" fill="none" stroke="#1a73c8" stroke-width="1" /></svg>
<svg style="left:1253px;top:407px" width="18" height="18" viewBox="0 0 18 18"><path d="M4 1H14V6A5 5 0 0 1 4 6Z" fill="#f8f8f8" stroke="#3b3a39" stroke-width="1" /><path d="M4 3H1V5A4 4 0 0 0 5 9M14 3H17V5A4 4 0 0 1 13 9" fill="none" stroke="#3b3a39" stroke-width="1" /><rect x="4" y="1" width="10" height="1.5" fill="#8dc1ee" stroke="#1a73c8" stroke-width="1"/><path d="M9 11V13M6 14H12" fill="none" stroke="#3b3a39" stroke-width="1" /><rect x="5" y="15" width="8" height="2" fill="#8dc1ee" stroke="#1a73c8" stroke-width="1"/></svg>
<svg style="left:1113px;top:435px" width="18" height="18" viewBox="0 0 18 18"><path d="M1 0.6H12L16.5 5V17.4H1Z" fill="#f0f0f0" stroke="#3b3a39" stroke-width="1.2" /><path d="M12 0.6V5H16.5" fill="none" stroke="#3b3a39" stroke-width="1" /><rect x="4" y="11" width="2" height="5" fill="#3b3a39" stroke="none" stroke-width="1"/><rect x="8" y="13" width="2" height="3" fill="#3b3a39" stroke="none" stroke-width="1"/><rect x="12" y="8" width="2" height="8" fill="#3b3a39" stroke="none" stroke-width="1"/></svg>
<svg style="left:1141px;top:435px" width="18" height="18" viewBox="0 0 18 18"><rect x="1.5" y="3" width="16" height="12" fill="#ffffff" stroke="#3b3a39" stroke-width="1"/><text x="10" y="11" font-size="7.5" text-anchor="middle" fill="#2a8ad8" font-family="Liberation Sans">123</text><path d="M2.5 13H16.5" fill="none" stroke="#8a8886" stroke-width="0.8" /><path d="M3 0L7 0L5 4H8L2 11L3.5 6H1Z" fill="#f29a2e" stroke="#d07010" stroke-width="0.6" /></svg>
<svg style="left:1169px;top:435px" width="18" height="18" viewBox="0 0 18 18"><rect x="1" y="1" width="15" height="16" fill="none" stroke="#1a73c8" stroke-width="1.2"/><path d="M4 17L7 9L10 8L12 4H16V12L10 16Z" fill="#8dc1ee" stroke="none" stroke-width="1" /><path d="M0.5 0.5H5V6L3 9L0.5 6Z" fill="#d86b00" stroke="none" stroke-width="1" /><circle cx="2.8" cy="3" r="1.1" fill="#fff"/><circle cx="15" cy="15" r="2.5" fill="#d86b00"/><rect x="16" y="9" width="2" height="2" fill="#d86b00"/></svg>
<svg style="left:1197px;top:435px" width="18" height="18" viewBox="0 0 18 18"><path d="M9 0.6L17.4 9L9 17.4L0.6 9Z" fill="none" stroke="#9b3fc4" stroke-width="1.1" /><path d="M4.8 4.8L13.2 13.2M13.2 4.8L4.8 13.2" fill="none" stroke="#9b3fc4" stroke-width="1" /></svg>
<svg style="left:1225px;top:435px" width="18" height="18" viewBox="0 0 18 18"><path d="M0.6 1.5H10L17 9L10 16.5H0.6L7.5 9Z" fill="none" stroke="#1a73c8" stroke-width="1.2" /><path d="M5 13L12 5.5" fill="none" stroke="#1a73c8" stroke-width="1" /></svg>
<svg style="left:1253px;top:435px" width="18" height="18" viewBox="0 0 18 18"><circle cx="3" cy="9" r="1" fill="#b06020"/><circle cx="9" cy="9" r="1" fill="#b06020"/><circle cx="15" cy="9" r="1" fill="#b06020"/></svg>
<div class="a" style="left:1102px;top:462px;width:180px;height:1px;background:#e1dfdd"></div>
<div class="t" style="left:1114px;top:474px;font-size:12px;color:#252423">Values</div>
<div class="a" style="left:1106px;top:493px;width:170px;height:28px;background:#fff;border:1px dashed #c8c6c4;border-radius:2px"></div>
<div class="t" style="left:1117px;top:502px;font-size:12px;color:#252423">Add data fields here</div>
<div class="t" style="left:1114px;top:534px;font-size:12px;color:#3b3a39;-webkit-text-stroke:0.4px #3b3a39">Drill through</div>
<div class="t" style="left:1114px;top:559px;font-size:12px;color:#252423">Cross-report</div>
<div class="a" style="left:1228px;top:557px;width:32px;height:16px;border:1px solid #605e5c;border-radius:8px;background:#fff"></div>
<div class="a" style="left:1232px;top:561px;width:8px;height:8px;border-radius:50%;background:#605e5c"></div>
<div class="t" style="left:1242px;top:561px;font-size:9px;color:#605e5c">Off</div>
<div class="t" style="left:1114px;top:586px;font-size:12px;color:#252423">Keep all filters</div>
<div class="a" style="left:1228px;top:584px;width:32px;height:16px;border-radius:8px;background:#117865"></div>
<div class="a" style="left:1248px;top:588px;width:8px;height:8px;border-radius:50%;background:#fff"></div>
<div class="t" style="left:1233px;top:588px;font-size:9px;color:#fff">On</div>
<div class="a" style="left:1106px;top:610px;width:170px;height:26px;background:#fff;border:1px dashed #c8c6c4;border-radius:2px"></div>
<div class="t" style="left:1115px;top:618px;font-size:12px;color:#252423;letter-spacing:0.1px">Add drill-through fields here</div>
<div class="a" style="left:1283px;top:154px;width:181px;height:847px;background:#f3f2f1"></div>
<div class="t" style="left:1292px;top:166px;font-size:16px;color:#252423;-webkit-text-stroke:0.55px #252423">Data</div>
<svg style="left:1443px;top:167px" width="13" height="13" viewBox="0 0 13 13"><path d="M6.5 0.8L12.2 6.5L6.5 12.2M0.8 0.8L6.5 6.5L0.8 12.2" fill="none" stroke="#252423" stroke-width="1.3"/></svg>
<div class="a" style="left:1287px;top:199px;width:172px;height:27px;background:#f3f2f1;border:1px solid #7a7978;border-radius:3px"></div>
<div class="a" style="left:1463px;top:154px;width:1px;height:847px;background:#d2d0ce"></div>
<svg style="left:1295px;top:206px" width="15" height="14" viewBox="0 0 15 14"><circle cx="9.5" cy="5" r="4.3" fill="none" stroke="#605e5c" stroke-width="1"/><path d="M6.5 8L1 13.5" stroke="#605e5c" stroke-width="1.1"/></svg>
<div class="t" style="left:1316px;top:207px;font-size:13px;color:#605e5c">Search</div>
<svg style="left:1291px;top:243px" width="11" height="7" viewBox="0 0 11 7"><path d="M0.5 0.5L5.5 6L10.5 0.5" fill="none" stroke="#605e5c" stroke-width="1"/></svg>
<svg style="left:1306px;top:241px" width="12" height="12" viewBox="0 0 12 12"><rect x="0.6" y="0.6" width="10.8" height="10.8" rx="2" fill="none" stroke="#252423" stroke-width="1.1"/><path d="M0.6 4H11.4M0.6 8H11.4M4 0.6V11.4M8 0.6V11.4" stroke="#252423" stroke-width="1"/></svg>
<div class="t" style="left:1324px;top:242px;font-size:12px;color:#252423">financials</div>
<div class="a" style="left:1321px;top:265px;width:12px;height:12px;border:1px solid #777675;border-radius:2px"></div>
<svg style="left:1341px;top:265px" width="11" height="12" viewBox="0 0 11 12"><path d="M10.8 0.8H0.8L5.6 6L0.8 11.3H10.8" fill="none" stroke="#252423" stroke-width="1.1"/></svg>
<div class="t" style="left:1359px;top:266px;font-size:12px;color:#323130">Sales</div>
<div class="a" style="left:1321px;top:289px;width:12px;height:12px;border:1px solid #777675;border-radius:2px"></div>
<svg style="left:1341px;top:289px" width="11" height="12" viewBox="0 0 11 12"><path d="M10.8 0.8H0.8L5.6 6L0.8 11.3H10.8" fill="none" stroke="#252423" stroke-width="1.1"/></svg>
<div class="t" style="left:1359px;top:290px;font-size:12px;color:#323130">COGS</div>
<div class="a" style="left:1321px;top:313px;width:12px;height:12px;border:1px solid #777675;border-radius:2px"></div>
<div class="t" style="left:1359px;top:314px;font-size:12px;color:#323130">Country</div>
<div class="a" style="left:1321px;top:337px;width:12px;height:12px;border:1px solid #777675;border-radius:2px"></div>
<svg style="left:1341px;top:338px" width="12" height="12" viewBox="0 0 12 12"><rect x="0.6" y="0.6" width="10.8" height="10.8" rx="1.5" fill="none" stroke="#252423" stroke-width="1.1"/><path d="M0.6 3.5H11.4" stroke="#252423"/><path d="M3 6h1M5.5 6h1M8 6h1M3 8.5h1M5.5 8.5h1M8 8.5h1" stroke="#252423"/></svg>
<svg style="left:1307px;top:339px" width="7" height="10" viewBox="0 0 7 10"><path d="M0.8 0.5L6 5L0.8 9.5" fill="none" stroke="#605e5c" stroke-width="1"/></svg>
<div class="t" style="left:1359px;top:338px;font-size:12px;color:#323130">Date</div>
<div class="a" style="left:1321px;top:361px;width:12px;height:12px;border:1px solid #777675;border-radius:2px"></div>
<div class="t" style="left:1359px;top:362px;font-size:12px;color:#323130">Discount Band</div>
<div class="a" style="left:1321px;top:385px;width:12px;height:12px;border:1px solid #777675;border-radius:2px"></div>
<svg style="left:1341px;top:385px" width="11" height="12" viewBox="0 0 11 12"><path d="M10.8 0.8H0.8L5.6 6L0.8 11.3H10.8" fill="none" stroke="#252423" stroke-width="1.1"/></svg>
<div class="t" style="left:1359px;top:386px;font-size:12px;color:#323130">Discounts</div>
<div class="a" style="left:1321px;top:409px;width:12px;height:12px;border:1px solid #777675;border-radius:2px"></div>
<svg style="left:1341px;top:409px" width="11" height="12" viewBox="0 0 11 12"><path d="M10.8 0.8H0.8L5.6 6L0.8 11.3H10.8" fill="none" stroke="#252423" stroke-width="1.1"/></svg>
<div class="t" style="left:1359px;top:410px;font-size:12px;color:#323130">Gross Sales</div>
<div class="a" style="left:1321px;top:433px;width:12px;height:12px;border:1px solid #777675;border-radius:2px"></div>
<svg style="left:1341px;top:433px" width="11" height="12" viewBox="0 0 11 12"><path d="M10.8 0.8H0.8L5.6 6L0.8 11.3H10.8" fill="none" stroke="#252423" stroke-width="1.1"/></svg>
<div class="t" style="left:1359px;top:434px;font-size:12px;color:#323130">Manufacturing P...</div>
<div class="a" style="left:1321px;top:457px;width:12px;height:12px;border:1px solid #777675;border-radius:2px"></div>
<div class="t" style="left:1359px;top:458px;font-size:12px;color:#323130">Month Name</div>
<div class="a" style="left:1321px;top:481px;width:12px;height:12px;border:1px solid #777675;border-radius:2px"></div>
<svg style="left:1341px;top:481px" width="11" height="12" viewBox="0 0 11 12"><path d="M10.8 0.8H0.8L5.6 6L0.8 11.3H10.8" fill="none" stroke="#252423" stroke-width="1.1"/></svg>
<div class="t" style="left:1359px;top:482px;font-size:12px;color:#323130">Month Number</div>
<div class="a" style="left:1321px;top:505px;width:12px;height:12px;border:1px solid #777675;border-radius:2px"></div>
<div class="t" style="left:1359px;top:506px;font-size:12px;color:#323130">Product</div>
<div class="a" style="left:1321px;top:529px;width:12px;height:12px;border:1px solid #777675;border-radius:2px"></div>
<svg style="left:1341px;top:529px" width="11" height="12" viewBox="0 0 11 12"><path d="M10.8 0.8H0.8L5.6 6L0.8 11.3H10.8" fill="none" stroke="#252423" stroke-width="1.1"/></svg>
<div class="t" style="left:1359px;top:530px;font-size:12px;color:#323130">Profit</div>
<div class="a" style="left:1321px;top:553px;width:12px;height:12px;border:1px solid #777675;border-radius:2px"></div>
<svg style="left:1341px;top:553px" width="11" height="12" viewBox="0 0 11 12"><path d="M10.8 0.8H0.8L5.6 6L0.8 11.3H10.8" fill="none" stroke="#252423" stroke-width="1.1"/></svg>
<div class="t" style="left:1359px;top:554px;font-size:12px;color:#323130">Sale Price</div>
<div class="a" style="left:1321px;top:577px;width:12px;height:12px;border:1px solid #777675;border-radius:2px"></div>
<div class="t" style="left:1359px;top:578px;font-size:12px;color:#323130">Segment</div>
<div class="a" style="left:1321px;top:601px;width:12px;height:12px;border:1px solid #777675;border-radius:2px"></div>
<svg style="left:1341px;top:601px" width="11" height="12" viewBox="0 0 11 12"><path d="M10.8 0.8H0.8L5.6 6L0.8 11.3H10.8" fill="none" stroke="#252423" stroke-width="1.1"/></svg>
<div class="t" style="left:1359px;top:602px;font-size:12px;color:#323130">Units Sold</div>
<div class="a" style="left:1321px;top:625px;width:12px;height:12px;border:1px solid #777675;border-radius:2px"></div>
<svg style="left:1341px;top:625px" width="11" height="12" viewBox="0 0 11 12"><path d="M10.8 0.8H0.8L5.6 6L0.8 11.3H10.8" fill="none" stroke="#252423" stroke-width="1.1"/></svg>
<div class="t" style="left:1359px;top:626px;font-size:12px;color:#323130">Year</div>
<div class="a" style="left:1068px;top:154px;width:396px;height:5px;background:linear-gradient(rgba(0,0,0,0.06),rgba(0,0,0,0))"></div>
<div class="a" style="left:0;top:966px;width:1102px;height:36px;background:#f3f2f1;border-bottom:1px solid #e1dfdd"></div>
<div class="a" style="left:0;top:1001px;width:1464px;height:1px;background:#e1dfdd"></div>
<div class="a" style="left:1101px;top:966px;width:1px;height:35px;background:#e1dfdd"></div>
<svg style="left:47px;top:973px" width="21" height="15" viewBox="0 0 21 15"><rect x="0.6" y="0.6" width="19.8" height="11" fill="none" stroke="#252423" stroke-width="1.2"/><path d="M10.5 11.6V14.3M6 14.3H15" stroke="#252423" stroke-width="1.2"/></svg>
<div class="a" style="left:46px;top:994px;width:24px;height:3px;border-radius:2px;background:#117865"></div>
<svg style="left:95px;top:972px" width="14" height="19" viewBox="0 0 14 19"><rect x="0.6" y="0.6" width="12.8" height="17.8" rx="1.5" fill="none" stroke="#605e5c" stroke-width="1.1"/><path d="M6 15.5H8" stroke="#605e5c" stroke-width="1.2"/></svg>
<svg style="left:130px;top:979px" width="5" height="8" viewBox="0 0 5 8"><path d="M5 0V8L0 4Z" fill="#c8c6c4"/></svg>
<svg style="left:152px;top:979px" width="5" height="8" viewBox="0 0 5 8"><path d="M0 0V8L5 4Z" fill="#c8c6c4"/></svg>
<div class="a" style="left:163px;top:966px;width:56px;height:35px;background:#fff;border-left:1px solid #d2d0ce;border-right:1px solid #d2d0ce"></div>
<div class="a" style="left:164px;top:997px;width:54px;height:4px;background:#117865"></div>
<div class="a" style="left:272px;top:966px;width:1px;height:35px;background:#e1dfdd"></div>
<div class="a" style="left:326px;top:966px;width:1px;height:35px;background:#e1dfdd"></div>
<div class="a" style="left:381px;top:966px;width:1px;height:35px;background:#e1dfdd"></div>
<div class="a" style="left:436px;top:966px;width:1px;height:35px;background:#e1dfdd"></div>
<div class="t" style="left:170.5px;top:978px;width:40px;text-align:center;font-size:12px;color:#252423">(1)</div>
<div class="t" style="left:224px;top:978px;width:40px;text-align:center;font-size:12px;color:#252423">(2)</div>
<div class="t" style="left:279px;top:978px;width:40px;text-align:center;font-size:12px;color:#252423">(3)</div>
<div class="t" style="left:334px;top:978px;width:40px;text-align:center;font-size:12px;color:#252423">(4)</div>
<div class="t" style="left:388px;top:978px;width:40px;text-align:center;font-size:12px;color:#252423">(5)</div>
<div class="t" style="left:443px;top:978px;width:40px;text-align:center;font-size:12px;color:#252423">(6)</div>
<div class="a" style="left:491px;top:968px;width:39px;height:32px;background:#117865"></div>
<svg style="left:503px;top:977px" width="14" height="14" viewBox="0 0 14 14"><path d="M7 1V13M1 7H13" stroke="#fff" stroke-width="2.4"/></svg>
<div class="t" style="left:1px;top:1008px;font-size:11.6px;color:#252423">Page 1 of 6</div>
<div class="t" style="left:1058px;top:1007px;font-size:12px;color:#252423">-</div>
<div class="a" style="left:1067px;top:1013px;width:99px;height:1px;background:#605e5c"></div>
<div class="a" style="left:1105px;top:1008px;width:4px;height:11px;background:#605e5c"></div>
<div class="a" style="left:1117px;top:1010px;width:1px;height:6px;background:#605e5c"></div>
<div class="t" style="left:1172px;top:1007px;font-size:12px;color:#252423">+</div>
<div class="t" style="left:1198px;top:1008px;font-size:12px;color:#605e5c">81%</div>
<svg style="left:1236px;top:1007px" width="16" height="12" viewBox="0 0 16 12"><rect x="0.6" y="0.6" width="14.8" height="10.8" fill="none" stroke="#605e5c" stroke-width="1.1"/><path d="M3 4.5V3H5M11 3H13V4.5M13 7.5V9H11M5 9H3V7.5" fill="none" stroke="#605e5c" stroke-width="1"/></svg>
<div class="t" style="left:1266px;top:1008px;font-size:12px;color:#252423">Update available (click to download)</div><!--/PANES-->
<!--REST-->

</body></html>
